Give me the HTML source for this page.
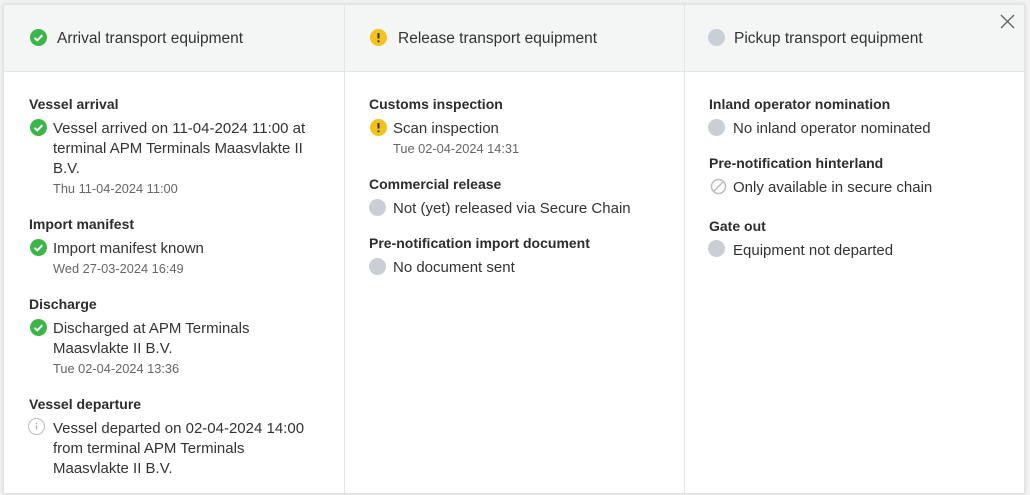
<!DOCTYPE html>
<html><head><meta charset="utf-8"><style>
*{margin:0;padding:0;box-sizing:border-box}
body{width:1030px;height:483px;overflow:hidden;background:#f3f3f3;font-family:"Liberation Sans",Arial,sans-serif;color:#333;position:relative}
.panel{position:absolute;left:3px;top:4px;width:1022px;height:490px;background:#fff;border:1px solid #e2e4e4;box-shadow:0 0 4px rgba(0,0,0,.12)}
.hdr{position:absolute;left:0;top:0;width:100%;height:67px;background:#f4f6f6;border-bottom:1px solid #e3e6e6}
.vl{position:absolute;top:0;width:1px;height:490px;background:#e3e6e6}
.t{position:absolute;font-size:15px;white-space:nowrap;line-height:20px}
.h{font-size:15.5px;top:29px}
.b{font-weight:bold;color:#2d2d2d;font-size:14px}
.d{font-size:12.8px;color:#666}
.ic{position:absolute;width:17px;height:17px;border-radius:50%}
.g{background:#3cb54a}
.y{background:#f3c21b}
.gr{background:#c9cfd4}
.ic svg{position:absolute;left:0;top:0}
</style></head><body>
<div class="panel">
<div class="hdr"></div>
<div class="vl" style="left:340px"></div>
<div class="vl" style="left:680px"></div>
</div>
<svg style="position:absolute;left:1000px;top:14px" width="15" height="15" viewBox="0 0 15 15"><path d="M1 1L14 14M14 1L1 14" stroke="#666" stroke-width="1.4"/></svg>

<div class="ic g" style="left:30px;top:29px"><svg width="17" height="17"><path d="M4.5 8.8l2.8 2.6 5-5.2" fill="none" stroke="#fff" stroke-width="2"/></svg></div>
<div class="t h" style="left:57px">Arrival transport equipment</div>
<div class="ic y" style="left:370px;top:29px"><svg width="17" height="17"><path d="M8.5 4v5.5" stroke="#333" stroke-width="2"/><circle cx="8.5" cy="12.3" r="1.1" fill="#333"/></svg></div>
<div class="t h" style="left:398px">Release transport equipment</div>
<div class="ic gr" style="left:708px;top:29px"></div>
<div class="t h" style="left:734px">Pickup transport equipment</div>

<div class="t b" style="left:29px;top:94px">Vessel arrival</div>
<div class="ic g" style="left:30px;top:119px"><svg width="17" height="17"><path d="M4.5 8.8l2.8 2.6 5-5.2" fill="none" stroke="#fff" stroke-width="2"/></svg></div>
<div class="t" style="left:53px;top:119px">Vessel arrived on 11-04-2024 11:00 at<br>terminal APM Terminals Maasvlakte II<br>B.V.</div>
<div class="t d" style="left:53px;top:179px">Thu 11-04-2024 11:00</div>

<div class="t b" style="left:29px;top:214px">Import manifest</div>
<div class="ic g" style="left:30px;top:239px"><svg width="17" height="17"><path d="M4.5 8.8l2.8 2.6 5-5.2" fill="none" stroke="#fff" stroke-width="2"/></svg></div>
<div class="t" style="left:53px;top:239px">Import manifest known</div>
<div class="t d" style="left:53px;top:259px">Wed 27-03-2024 16:49</div>

<div class="t b" style="left:29px;top:294px">Discharge</div>
<div class="ic g" style="left:30px;top:319px"><svg width="17" height="17"><path d="M4.5 8.8l2.8 2.6 5-5.2" fill="none" stroke="#fff" stroke-width="2"/></svg></div>
<div class="t" style="left:53px;top:319px">Discharged at APM Terminals<br>Maasvlakte II B.V.</div>
<div class="t d" style="left:53px;top:359px">Tue 02-04-2024 13:36</div>

<div class="t b" style="left:29px;top:394px">Vessel departure</div>
<div class="ic" style="left:28px;top:418px;border:1px solid #bbb"><svg width="15" height="15"><path d="M7.5 6.5v4" stroke="#aaa" stroke-width="1.2"/><circle cx="7.5" cy="4.5" r=".8" fill="#aaa"/></svg></div>
<div class="t" style="left:53px;top:419px">Vessel departed on 02-04-2024 14:00<br>from terminal APM Terminals<br>Maasvlakte II B.V.</div>

<div class="t b" style="left:369px;top:94px">Customs inspection</div>
<div class="ic y" style="left:370px;top:119px"><svg width="17" height="17"><path d="M8.5 4v5.5" stroke="#333" stroke-width="2"/><circle cx="8.5" cy="12.3" r="1.1" fill="#333"/></svg></div>
<div class="t" style="left:393px;top:119px">Scan inspection</div>
<div class="t d" style="left:393px;top:139px">Tue 02-04-2024 14:31</div>
<div class="t b" style="left:369px;top:174px">Commercial release</div>
<div class="ic gr" style="left:369px;top:199px"></div>
<div class="t" style="left:393px;top:199px">Not (yet) released via Secure Chain</div>
<div class="t b" style="left:369px;top:233px">Pre-notification import document</div>
<div class="ic gr" style="left:369px;top:258px"></div>
<div class="t" style="left:393px;top:258px">No document sent</div>

<div class="t b" style="left:709px;top:94px">Inland operator nomination</div>
<div class="ic gr" style="left:708px;top:119px"></div>
<div class="t" style="left:733px;top:119px">No inland operator nominated</div>
<div class="t b" style="left:709px;top:153px">Pre-notification hinterland</div>
<svg style="position:absolute;left:710px;top:178px" width="17" height="17" viewBox="0 0 17 17"><circle cx="8.5" cy="8.5" r="7" fill="none" stroke="#bbb" stroke-width="1.4"/><path d="M4 13L13 4" stroke="#bbb" stroke-width="1.4"/></svg>
<div class="t" style="left:733px;top:178px">Only available in secure chain</div>
<div class="t b" style="left:709px;top:216px">Gate out</div>
<div class="ic gr" style="left:708px;top:240px"></div>
<div class="t" style="left:733px;top:241px">Equipment not departed</div>
</body></html>
